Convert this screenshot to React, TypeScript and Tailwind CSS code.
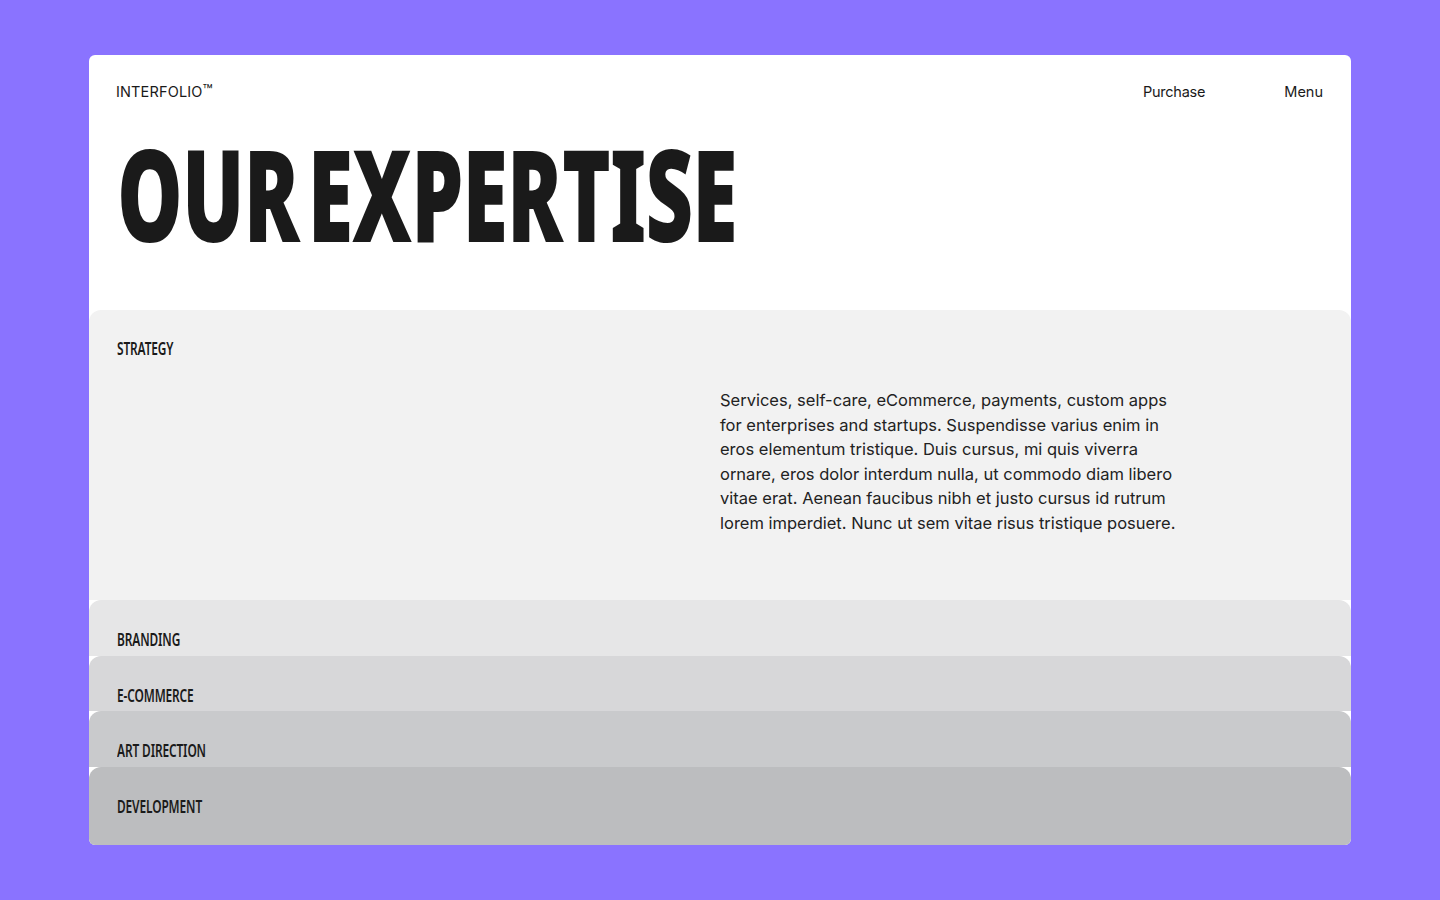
const panels = [
  { label: "BRANDING", bg: "bg-[#e6e6e7]" },
  { label: "E-COMMERCE", bg: "bg-[#d7d7d9]" },
  { label: "ART DIRECTION", bg: "bg-[#c9cacc]" },
];

function Label({ children }: { children: React.ReactNode }) {
  return (
    <h2 className="inline-block origin-left scale-x-[0.7] font-['Noto_Sans',sans-serif] font-semibold text-[17px] leading-5 tracking-[-0.01em]">
      {children}
    </h2>
  );
}

export default function App() {
  return (
    <div className="min-h-screen bg-[#8a73ff] px-[89px] py-[55px] font-['Inter','Noto_Sans',sans-serif] text-[#1a1a1a]">
      <div className="h-[790px] bg-white rounded-md overflow-hidden flex flex-col">
        {/* Header */}
        <header className="flex items-center justify-between pl-[27px] pr-[28px] pt-[27px] text-[14.5px] leading-5">
          <span className="tracking-[0.01em]">
            INTERFOLIO<span className="text-[1.15em] leading-none">™</span>
          </span>
          <nav className="flex items-center gap-[79px]">
            <a className="tracking-[-0.015em]">Purchase</a>
            <a>Menu</a>
          </nav>
        </header>

        {/* Title */}
        <div className="mt-[27px] pl-[28px] h-[127px]">
          <h1 className="inline-block origin-left scale-x-[0.65] whitespace-nowrap font-['Noto_Sans',sans-serif] font-black text-[127px] leading-none tracking-[-0.01em] [word-spacing:-0.14em]">
            OUR EXPERTISE
          </h1>
        </div>

        {/* Accordion */}
        <div className="mt-[54px] flex-1 flex flex-col">
          <section className="h-[290px] shrink-0 bg-[#f2f2f2] rounded-t-xl px-[28px] pt-[27px]">
            <Label>STRATEGY</Label>
            <div className="grid grid-cols-2 -mx-[28px] mt-[27px]">
              <div />
              <p className="max-w-[465px] text-[16.5px] leading-[24.6px] text-[#222]">
                Services, self-care, eCommerce, payments, custom apps for enterprises and startups. Suspendisse varius enim in eros elementum tristique. Duis cursus, mi quis viverra ornare, eros dolor interdum nulla, ut commodo diam libero vitae erat. Aenean faucibus nibh et justo cursus id rutrum lorem imperdiet. Nunc ut sem vitae risus tristique posuere.
              </p>
            </div>
          </section>
          {panels.map((p) => (
            <section key={p.label} className={`h-[55.5px] shrink-0 ${p.bg} rounded-t-xl px-[28px] pt-[28px]`}>
              <Label>{p.label}</Label>
            </section>
          ))}
          <section className="flex-1 bg-[#bcbdbf] rounded-t-xl px-[28px] pt-[28px]">
            <Label>DEVELOPMENT</Label>
          </section>
        </div>
      </div>
    </div>
  );
}
